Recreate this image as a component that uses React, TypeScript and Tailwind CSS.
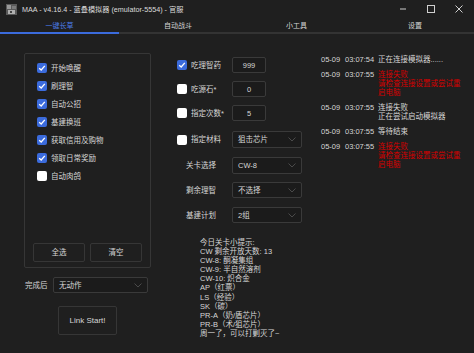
import React from "react";

const Check = ({ on }: { on: boolean }) => (
  <span
    className={
      "w-[10px] h-[10px] rounded-[2px] flex items-center justify-center shrink-0 " +
      (on ? "bg-[#3b6bdc]" : "bg-white")
    }
  >
    {on && (
      <svg width="8" height="8" viewBox="0 0 8 8">
        <path d="M1.2 4.2 L3.2 6 L6.8 1.8" stroke="white" strokeWidth="1.3" fill="none" />
      </svg>
    )}
  </span>
);

const Select = ({ value, className }: { value: string; className: string }) => (
  <div
    className={
      "border border-[#3a3a3a] bg-[#1b1b1b] rounded-[2px] flex items-center justify-between pl-[5px] pr-[5px] " +
      className
    }
  >
    <span>{value}</span>
    <svg width="8" height="5" viewBox="0 0 8 5">
      <path d="M0.5 0.5 L4 4 L7.5 0.5" stroke="#4a4a4a" strokeWidth="1" fill="none" />
    </svg>
  </div>
);

const tasks: [string, boolean][] = [
  ["开始唤醒", true],
  ["刷理智", true],
  ["自动公招", true],
  ["基建换班", true],
  ["获取信用及购物", true],
  ["领取日常奖励", true],
  ["自动肉鸽", false],
];

const hints = [
  "今日关卡小提示:",
  "CW 剩余开放天数: 13",
  "CW-8: 酮凝集组",
  "CW-9: 半自然溶剂",
  "CW-10: 炽合金",
  "AP（红票）",
  "LS（经验）",
  "SK（碳）",
  "PR-A（奶/盾芯片）",
  "PR-B（术/狙芯片）",
  "周一了，可以打剿灭了~",
];

const logs: { time: string; lines: string[]; red?: boolean }[] = [
  { time: "03:07:54", lines: ["正在连接模拟器......"] },
  { time: "03:07:55", lines: ["连接失败", "请检查连接设置或尝试重", "启电脑"], red: true },
  { time: "03:07:55", lines: ["连接失败", "正在尝试启动模拟器"] },
  { time: "03:07:55", lines: ["等待结束"] },
  { time: "03:07:55", lines: ["连接失败", "请检查连接设置或尝试重", "启电脑"], red: true },
];

const App = () => {
  return (
    <div className="w-[474px] h-[353px] overflow-hidden bg-[#1f1f1f] text-[#d6d6d6] font-['Liberation_Sans','Noto_Sans_CJK_SC',sans-serif] text-[7.5px] leading-[9px]">
      {/* title bar */}
      <div className="h-[18px] flex items-center">
        <svg className="ml-[6px]" width="11" height="11" viewBox="0 0 11 11">
          <rect x="0" y="0" width="11" height="11" fill="#5a5a5a" />
          <rect x="1" y="1" width="4" height="4" fill="#9a9a9a" />
          <rect x="6" y="2" width="4" height="3" fill="#7c7c7c" />
          <rect x="2" y="6" width="7" height="4" fill="#b0b0b0" />
          <rect x="4" y="7" width="2" height="2" fill="#444" />
        </svg>
        <span className="ml-[5px] text-[7.2px] text-[#dcdcdc]">
          MAA - v4.16.4 - 蓝叠模拟器 (emulator-5554) - 官服
        </span>
        <div className="ml-auto flex items-center">
          <div className="w-[28px] h-[18px] flex items-center justify-center">
            <svg width="8" height="8" viewBox="0 0 8 8">
              <path d="M1 4 H7" stroke="#cfcfcf" strokeWidth="1" />
            </svg>
          </div>
          <div className="w-[28px] h-[18px] flex items-center justify-center">
            <svg width="8" height="8" viewBox="0 0 8 8">
              <rect x="0.5" y="0.5" width="7" height="7" stroke="#cfcfcf" strokeWidth="1" fill="none" />
            </svg>
          </div>
          <div className="w-[28px] h-[18px] flex items-center justify-center mr-[1px]">
            <svg width="8" height="8" viewBox="0 0 8 8">
              <path d="M0.5 0.5 L7.5 7.5 M7.5 0.5 L0.5 7.5" stroke="#cfcfcf" strokeWidth="1" />
            </svg>
          </div>
        </div>
      </div>

      {/* tabs */}
      <div className="h-[14px] flex items-center text-[7px]">
        <div className="w-[119px] text-center text-[#4a7ae6]">一键长草</div>
        <div className="w-[118px] text-center">自动战斗</div>
        <div className="w-[119px] text-center">小工具</div>
        <div className="w-[118px] text-center">设置</div>
      </div>
      <div className="flex h-[2px]">
        <div className="w-[119px] bg-[#3b6bdc]" />
        <div className="flex-1 bg-[#333333]" />
      </div>

      {/* body */}
      <div className="flex">
        {/* left column */}
        <div className="w-[151px] pl-[24px] pt-[19px] flex flex-col">
          <div className="h-[215px] border border-[#363636] rounded-[2px] flex flex-col pt-[5px] pb-[5px] px-[8px]">
            <div className="flex flex-col pl-[4px]">
              {tasks.map(([t, on]) => (
                <div key={t} className="h-[18px] flex items-center gap-[4px]">
                  <Check on={on} />
                  <span>{t}</span>
                </div>
              ))}
            </div>
            <div className="mt-auto flex gap-[5px]">
              <div className="flex-1 h-[19px] border border-[#363636] rounded-[2px] flex items-center justify-center">
                全选
              </div>
              <div className="flex-1 h-[19px] border border-[#363636] rounded-[2px] flex items-center justify-center">
                清空
              </div>
            </div>
          </div>
          <div className="mt-[9px] flex items-center">
            <span className="ml-[1px] w-[28px]">完成后</span>
            <Select value="无动作" className="w-[95px] h-[16px]" />
          </div>
          <div className="mt-[13px] mx-auto w-[59px] h-[29px] border border-[#363636] rounded-[2px] flex items-center justify-center text-[8px]">
            Link Start!
          </div>
        </div>

        {/* middle column */}
        <div className="w-[159px] pl-[26px] pt-[23px] flex flex-col">
          <div className="h-[16px] flex items-center">
            <div className="w-[55px] flex items-center gap-[4px]">
              <Check on={true} />
              <span>吃理智药</span>
            </div>
            <div className="w-[34px] h-[16px] border border-[#3a3a3a] bg-[#1b1b1b] rounded-[2px] flex items-center justify-center">
              999
            </div>
          </div>
          <div className="mt-[8px] h-[16px] flex items-center">
            <div className="w-[55px] flex items-center gap-[4px]">
              <Check on={false} />
              <span>吃源石*</span>
            </div>
            <div className="w-[34px] h-[16px] border border-[#3a3a3a] bg-[#1b1b1b] rounded-[2px] flex items-center justify-center">
              0
            </div>
          </div>
          <div className="mt-[8px] h-[16px] flex items-center">
            <div className="w-[55px] flex items-center gap-[4px]">
              <Check on={false} />
              <span>指定次数*</span>
            </div>
            <div className="w-[34px] h-[16px] border border-[#3a3a3a] bg-[#1b1b1b] rounded-[2px] flex items-center justify-center">
              5
            </div>
          </div>
          <div className="mt-[10px] h-[17px] flex items-center">
            <div className="w-[55px] flex items-center gap-[4px]">
              <Check on={false} />
              <span>指定材料</span>
            </div>
            <Select value="狙击芯片" className="w-[70px] h-[17px]" />
          </div>
          <div className="mt-[9px] h-[17px] flex items-center">
            <span className="w-[55px] pl-[9px]">关卡选择</span>
            <Select value="CW-8" className="w-[70px] h-[17px]" />
          </div>
          <div className="mt-[8px] h-[16px] flex items-center">
            <span className="w-[55px] pl-[9px]">剩余理智</span>
            <Select value="不选择" className="w-[70px] h-[16px]" />
          </div>
          <div className="mt-[9px] h-[16px] flex items-center">
            <span className="w-[55px] pl-[9px]">基建计划</span>
            <Select value="2组" className="w-[70px] h-[16px]" />
          </div>
          <div className="mt-[15px] pl-[23px] flex flex-col leading-[9.1px]">
            {hints.map((h) => (
              <span key={h} className="whitespace-nowrap">
                {h}
              </span>
            ))}
          </div>
        </div>

        {/* log column */}
        <div className="flex-1 pl-[11px] pt-[21px] flex flex-col gap-[6px]">
          {logs.map((l, i) => (
            <div key={i} className="flex">
              <span className="w-[24px]">05-09</span>
              <span className="w-[33px]">{l.time}</span>
              <div className={"flex flex-col whitespace-nowrap " + (l.red ? "text-[#d40000]" : "")}>
                {l.lines.map((s) => (
                  <span key={s}>{s}</span>
                ))}
              </div>
            </div>
          ))}
        </div>
      </div>
    </div>
  );
};

export default App;
